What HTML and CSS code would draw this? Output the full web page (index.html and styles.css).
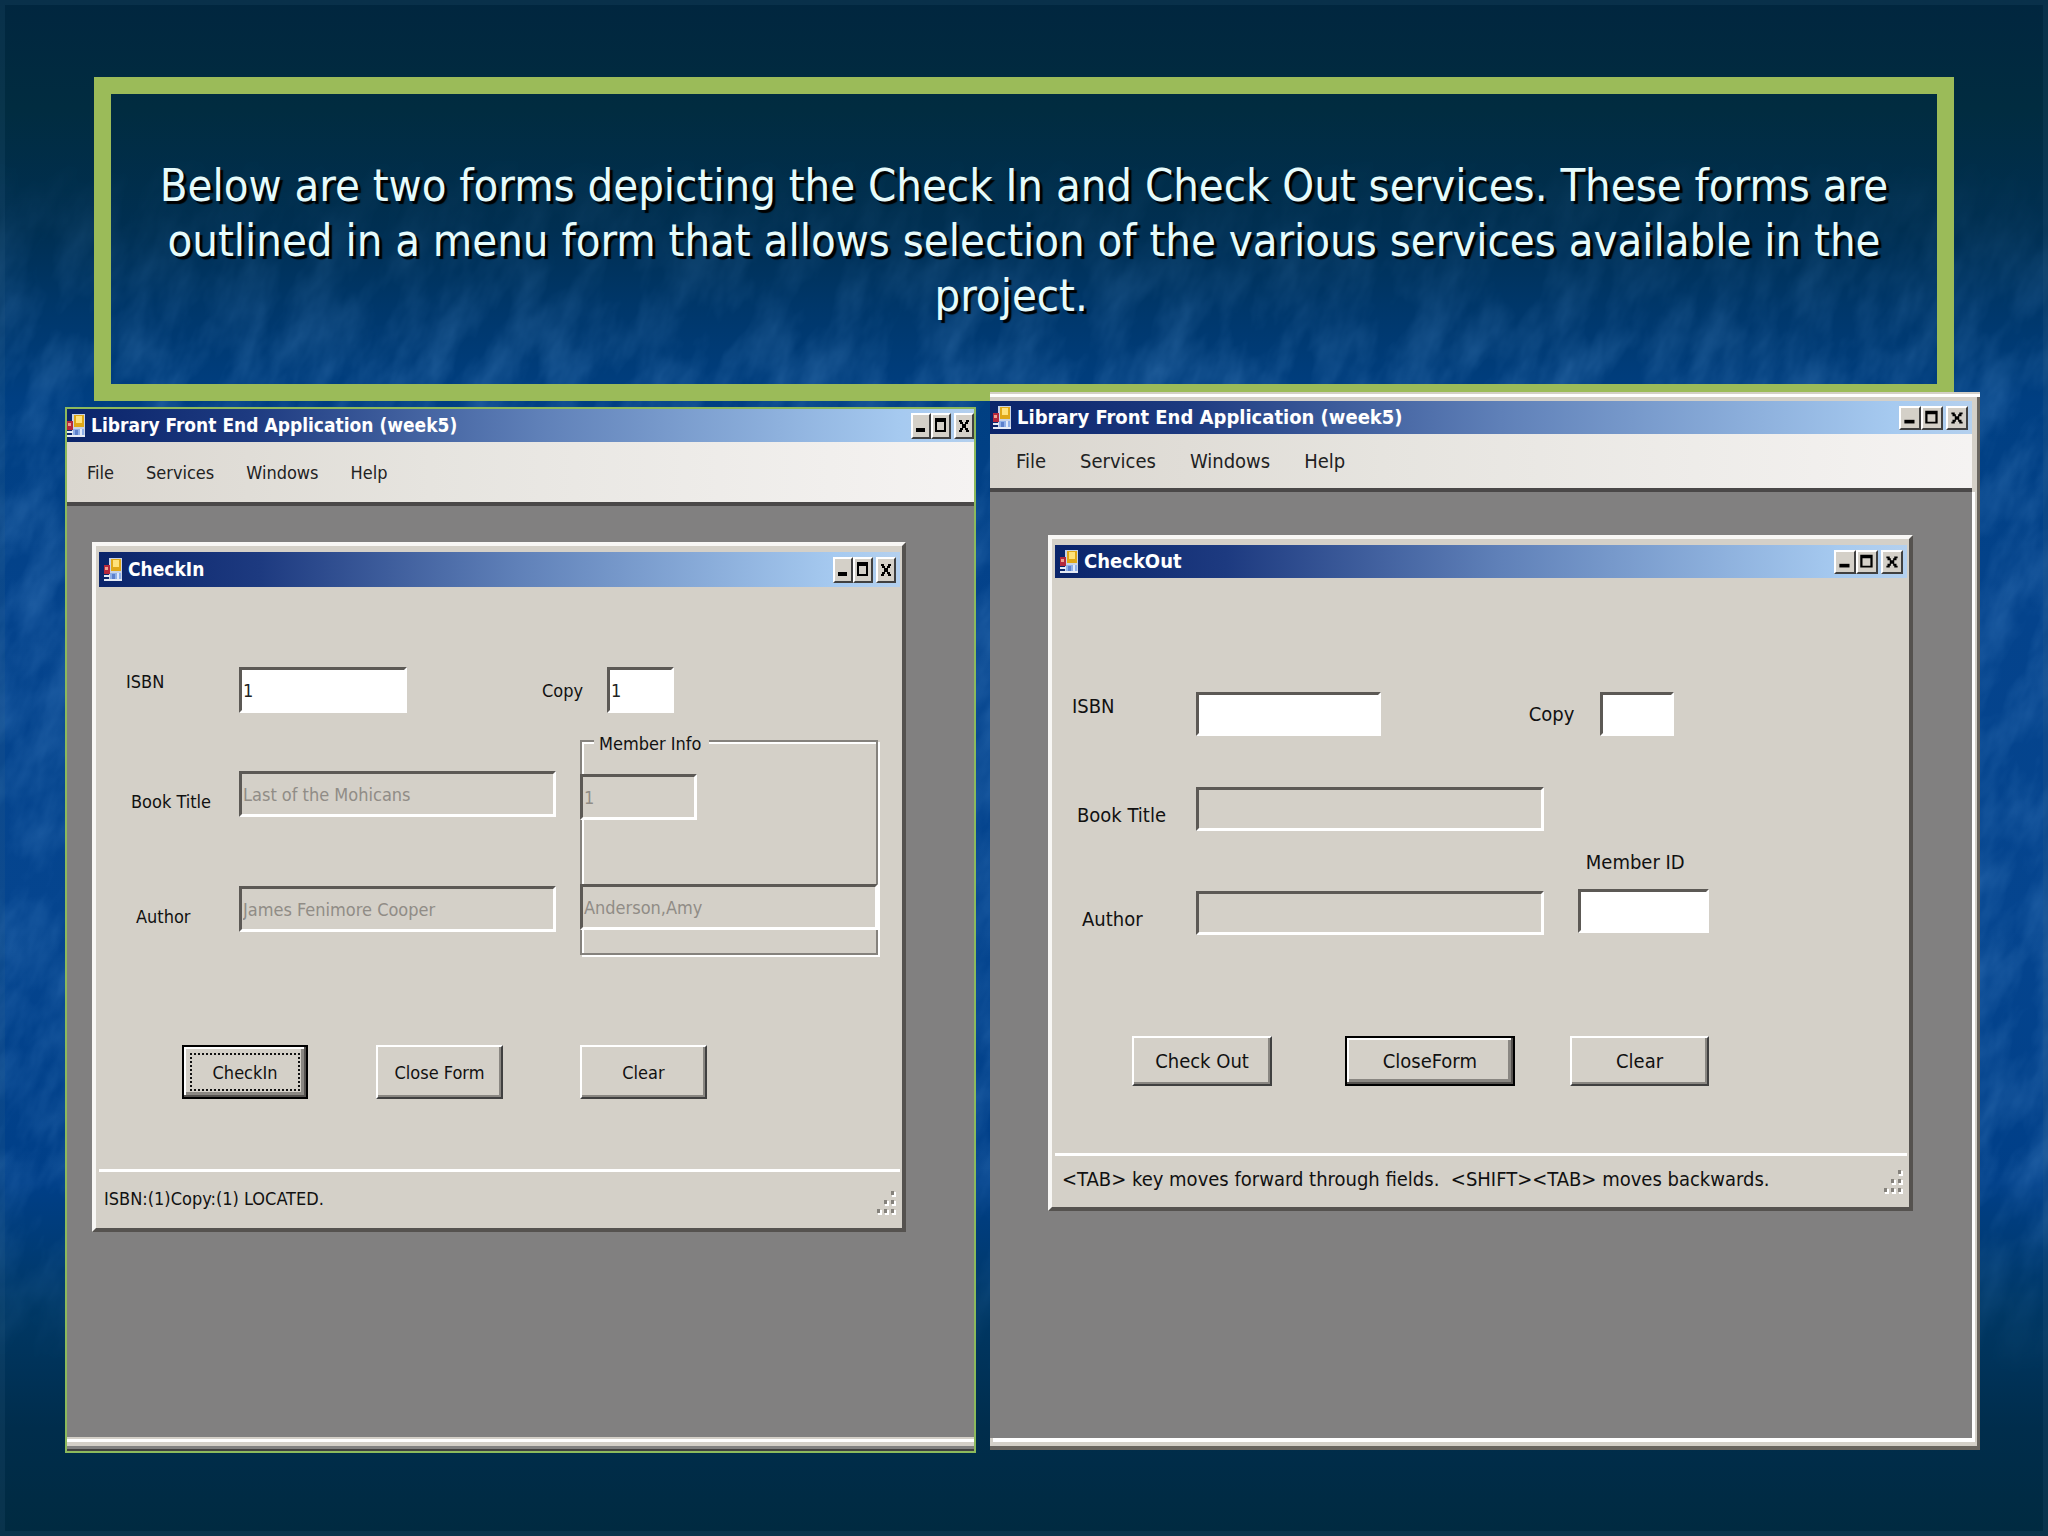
FILE: index.html
```
<!DOCTYPE html>
<html lang="en">
<head>
    <meta charset="UTF-8">
    <meta name="viewport" content="width=device-width, initial-scale=1.0">
    <title>Check In and Check Out</title>
    <link rel="stylesheet" href="styles.css">
</head>
<body>
    <!-- water texture behind the slide -->
    <svg class="texture" aria-hidden="true">
        <filter id="water" x="0" y="0" width="100%" height="100%">
            <feTurbulence type="fractalNoise" baseFrequency="0.03 0.013" numOctaves="4" seed="7"/>
            <feColorMatrix values="0 0 0 0 0.15  0 0 0 0 0.4  0 0 0 0 0.78  1.6 0 0 0 -0.55"/>
        </filter>
        <rect x="-30%" y="-60%" width="160%" height="220%" filter="url(#water)" transform="rotate(24 1024 768)"/>
    </svg>

    <!-- shared window icons -->
    <svg class="defs" aria-hidden="true">
        <symbol id="app-icon" viewBox="0 0 18 23" preserveAspectRatio="none">
            <rect x="5" y="0" width="13" height="23" fill="#c9d3e6"/>
            <rect x="0" y="7" width="6" height="9" fill="#b5283c"/>
            <rect x="1" y="9" width="3" height="3" fill="#f0a090"/>
            <rect x="0" y="17" width="6" height="2" fill="#e6ebf5"/>
            <rect x="0" y="21" width="18" height="2" fill="#e6ebf5"/>
            <rect x="7" y="1" width="10" height="12" fill="#e0a818"/>
            <rect x="9" y="2" width="6" height="7" fill="#ffe27a"/>
            <rect x="6" y="15" width="11" height="6" fill="#8fb0e8"/>
            <rect x="8" y="16" width="3" height="5" fill="#5c80cc"/>
            <rect x="13" y="15" width="2" height="6" fill="#dfe8fa"/>
        </symbol>
        <symbol id="ico-min" viewBox="0 0 16 22" preserveAspectRatio="none">
            <rect x="3" y="13" width="9" height="4" fill="#000"/>
        </symbol>
        <symbol id="ico-max" viewBox="0 0 16 22" preserveAspectRatio="none">
            <path d="M2 3h11v14H2zM4 7v8h7V7z" fill="#000" fill-rule="evenodd"/>
        </symbol>
        <symbol id="ico-close" viewBox="0 0 16 22" preserveAspectRatio="none">
            <path d="M3 5h3v2h1v2h2V7h1V5h3v2h-1v2h-2v4h2v2h1v2h-3v-2H9v-2H7v2H6v2H3v-2h1v-2h2V9H4V7H3z" fill="#000"/>
        </symbol>
        <symbol id="grip" viewBox="0 0 21 26" preserveAspectRatio="none">
            <path d="M16 2h4v5h-4zM9 11h4v5H9zM16 11h4v5h-4zM2 20h4v5H2zM9 20h4v5H9zM16 20h4v5h-4z" fill="#fff"/>
            <path d="M15 1h3v4h-3zM8 10h3v4H8zM15 10h3v4h-3zM1 19h3v4H1zM8 19h3v4H8zM15 19h3v4h-3z" fill="#85827c"/>
        </symbol>
    </svg>

    <div class="slide">
        <h1>Below are two forms depicting the Check In and Check Out services. These forms are outlined in a menu form that allows selection of the various services available in the project.&nbsp;&nbsp;</h1>

        <div class="desktop">
            <section class="app app-in">
                <div class="titlebar">
                    <svg class="app-icon"><use href="#app-icon"/></svg>
                    <span class="caption">Library Front End Application (week5)</span>
                    <button type="button" aria-label="Minimize"><svg><use href="#ico-min"/></svg></button>
                    <button type="button" aria-label="Maximize"><svg><use href="#ico-max"/></svg></button>
                    <button type="button" class="close" aria-label="Close"><svg><use href="#ico-close"/></svg></button>
                </div>
                <nav class="menu">
                    <button type="button">File</button>
                    <button type="button">Services</button>
                    <button type="button">Windows</button>
                    <button type="button">Help</button>
                </nav>
                <div class="mdi">
                    <form class="child">
                        <div class="titlebar">
                            <svg class="app-icon"><use href="#app-icon"/></svg>
                            <span class="caption">CheckIn</span>
                            <button type="button" aria-label="Minimize"><svg><use href="#ico-min"/></svg></button>
                            <button type="button" aria-label="Maximize"><svg><use href="#ico-max"/></svg></button>
                            <button type="button" class="close" aria-label="Close"><svg><use href="#ico-close"/></svg></button>
                        </div>
                        <div class="row row-isbn">
                            <label for="in-isbn">ISBN</label>
                            <input type="text" id="in-isbn" value="1">
                            <label class="copy" for="in-copy">Copy</label>
                            <input type="text" id="in-copy" value="1">
                        </div>
                        <div class="row row-book">
                            <div class="fields">
                                <label class="title" for="in-title">Book Title</label>
                                <input type="text" id="in-title" value="Last of the Mohicans" disabled>
                                <label class="author" for="in-author">Author</label>
                                <input type="text" id="in-author" value="James Fenimore Cooper" disabled>
                            </div>
                            <fieldset class="member">
                                <legend>Member Info</legend>
                                <input type="text" class="member-no" aria-label="Member number" value="1" disabled>
                                <input type="text" class="member-name" aria-label="Member name" value="Anderson,Amy" disabled>
                            </fieldset>
                        </div>
                        <div class="row row-buttons">
                            <button type="button" class="btn default focused">CheckIn</button>
                            <button type="button" class="btn">Close Form</button>
                            <button type="button" class="btn">Clear</button>
                        </div>
                        <div class="status">
                            <span>ISBN:(1)Copy:(1) LOCATED.</span>
                            <svg class="grip"><use href="#grip"/></svg>
                        </div>
                    </form>
                </div>
            </section>

            <section class="app app-out">
                <div class="titlebar">
                    <svg class="app-icon"><use href="#app-icon"/></svg>
                    <span class="caption">Library Front End Application (week5)</span>
                    <button type="button" aria-label="Minimize"><svg><use href="#ico-min"/></svg></button>
                    <button type="button" aria-label="Maximize"><svg><use href="#ico-max"/></svg></button>
                    <button type="button" class="close" aria-label="Close"><svg><use href="#ico-close"/></svg></button>
                </div>
                <nav class="menu">
                    <button type="button">File</button>
                    <button type="button">Services</button>
                    <button type="button">Windows</button>
                    <button type="button">Help</button>
                </nav>
                <div class="mdi">
                    <form class="child">
                        <div class="titlebar">
                            <svg class="app-icon"><use href="#app-icon"/></svg>
                            <span class="caption">CheckOut</span>
                            <button type="button" aria-label="Minimize"><svg><use href="#ico-min"/></svg></button>
                            <button type="button" aria-label="Maximize"><svg><use href="#ico-max"/></svg></button>
                            <button type="button" class="close" aria-label="Close"><svg><use href="#ico-close"/></svg></button>
                        </div>
                        <div class="row row-isbn">
                            <label for="out-isbn">ISBN</label>
                            <input type="text" id="out-isbn">
                            <label class="copy" for="out-copy">Copy</label>
                            <input type="text" id="out-copy">
                        </div>
                        <div class="row row-book">
                            <div class="fields">
                                <label class="title" for="out-title">Book Title</label>
                                <input type="text" id="out-title" disabled>
                                <label class="author" for="out-author">Author</label>
                                <input type="text" id="out-author" disabled>
                            </div>
                            <div class="member-id">
                                <label for="out-member">Member ID</label>
                                <input type="text" id="out-member">
                            </div>
                        </div>
                        <div class="row row-buttons">
                            <button type="button" class="btn">Check Out</button>
                            <button type="button" class="btn default">CloseForm</button>
                            <button type="button" class="btn">Clear</button>
                        </div>
                        <div class="status">
                            <span>&lt;TAB&gt; key moves forward through fields.&nbsp; &lt;SHIFT&gt;&lt;TAB&gt; moves backwards.</span>
                            <svg class="grip"><use href="#grip"/></svg>
                        </div>
                    </form>
                </div>
            </section>
        </div>
    </div>
</body>
</html>
```
FILE: styles.css
```
* {
    box-sizing: border-box;
}
body {
    margin: 0;
    font-family: "DejaVu Sans Condensed", "Liberation Sans", sans-serif;
    background: linear-gradient(#01263f 0%, #012c40 7%, #002f52 15%, #00376a 20%, #003f82 26%, #04438c 40%, #05458f 60%, #003f88 77%, #003866 85%, #002d4c 93%, #002a40 100%);
}
.texture {
    position: absolute;
    inset: 0;
    width: 100%;
    height: 100%;
    opacity: 0.3;
    -webkit-mask-image: linear-gradient(transparent 10%, #000 24%, #000 76%, transparent 90%);
    mask-image: linear-gradient(transparent 10%, #000 24%, #000 76%, transparent 90%);
}
.defs {
    position: absolute;
    width: 0;
    height: 0;
}
.slide {
    position: relative;
    display: flex;
    flex-direction: column;
    min-height: 100vh;
    padding: 77px 68px 83px 65px;
    box-shadow: inset 0 0 0 5px rgba(60, 110, 140, 0.15);
}
h1 {
    display: flex;
    align-items: center;
    justify-content: center;
    height: 324px;
    margin: 0 26px 0 29px;
    padding: 2px 40px 0;
    border: 17px solid #9bbb59;
    color: #e6fbfb;
    font-size: 45px;
    font-weight: 400;
    line-height: 55px;
    text-align: center;
    text-shadow: 3px 3px 1px #000;
}
.desktop {
    display: grid;
    grid-template-columns: 911fr 990fr;
    gap: 14px;
    flex: 1;
}

/* application windows */
.app {
    display: flex;
    flex-direction: column;
    background: #d4d0c8;
    line-height: 25px;
}
.app-in {
    margin-top: 6px;
    border: 2px solid #8cb95c;
    font-size: 18px;
}
.app-out {
    margin-top: -9px;
    margin-bottom: 3px;
    padding: 4px 5px 0 0;
    border: solid #d4d0c8;
    border-width: 2px 0 0;
    box-shadow: inset 0 3px #fff, inset -3px -4px #69655f;
    font-size: 20px;
}
.titlebar {
    display: flex;
    align-items: center;
    color: #fff;
    background: linear-gradient(90deg, #0a246a, #1d3a80 20%, #5f80b8 52%, #a6caf0 92%, #b4d0ee);
}
.titlebar .caption {
    flex: 1;
    margin-left: 6px;
    font-weight: 700;
    white-space: nowrap;
}
.app-in .caption {
    font-size: 19px;
}
.titlebar button {
    width: 20px;
    height: 26px;
    padding: 0;
    border: solid;
    border-width: 2px;
    border-color: #fff #404040 #404040 #fff;
    background: #d4d0c8;
}
.titlebar button svg {
    display: block;
    width: 100%;
    height: 100%;
}
.titlebar .close {
    margin-left: 3px;
}
.app-icon {
    width: 18px;
    height: 23px;
}
.app-in > .titlebar {
    height: 33px;
}
.app-out > .titlebar {
    height: 33px;
    margin-top: 3px;
    margin-right: 3px;
    padding: 0 4px 0 3px;
}
.app-out .titlebar button {
    width: 22px;
    height: 24px;
}
.menu {
    display: flex;
    align-items: center;
    background: linear-gradient(90deg, #dad6cf, #e6e4df 40%, #f5f3f2);
}
.menu button {
    padding: 0;
    border: 0;
    background: none;
    color: #222;
    font: inherit;
}
.app-in .menu {
    gap: 32px;
    height: 60px;
    padding-left: 20px;
}
.app-out .menu {
    gap: 34px;
    height: 54px;
    margin-right: 3px;
    padding-left: 26px;
}
.mdi {
    flex: 1;
    background: #818080;
    border-top: 4px solid #4a4848;
}
.app-in .mdi {
    padding: 36px 68px 0 25px;
    margin-bottom: 14px;
    box-shadow: 0 2px #d4d0c8, 0 5px #fff, 0 9px #d4d0c8, 0 12px #808080, 0 14px #404040;
}
.app-out .mdi {
    padding: 43px 59px 0 58px;
    margin-right: 3px;
    margin-bottom: 12px;
    box-shadow: 3px 4px #fff;
    clip-path: inset(0 -3px -4px 0);
}

/* child forms */
.child {
    display: flex;
    flex-direction: column;
    padding: 6px 2px 4px 3px;
    border: solid;
    border-width: 4px;
    border-color: #f8f7f5 #55524f #55524f #f8f7f5;
    background: #d4d0c8;
    color: #111;
}
.child .titlebar {
    height: 35px;
    padding: 0 4px 0 5px;
}
.app-out .child .titlebar {
    height: 33px;
}
.row {
    display: grid;
}
input {
    width: 100%;
    min-width: 0;
    height: 46px;
    padding: 0 1px;
    border: solid;
    border-width: 3px;
    border-color: #5c5955 #fff #fff #5c5955;
    background: #fff;
    color: #222;
    font: inherit;
}
input:disabled {
    background: #d4d0c8;
    color: #908c86;
}
.app-out input {
    height: 44px;
}
.row-isbn label:first-child {
    padding-top: 2px;
}
.row-isbn .copy {
    grid-column: 4;
    align-self: center;
}
.title {
    padding: 18px 0 0 5px;
}
.author {
    padding: 18px 0 0 10px;
}
.app-out .title,
.app-out .author {
    padding-top: 16px;
}
.btn {
    height: 54px;
    padding: 0;
    border: 2px solid;
    border-color: #fff #404040 #404040 #fff;
    background: #d4d0c8;
    box-shadow: inset -2px -2px #8a8782;
    color: #111;
    font: inherit;
}
.default {
    border-color: #000;
    box-shadow: inset -2px -2px #55524f, inset 2px 2px #fff, inset -5px -5px #8a8782;
}
.focused {
    outline: 2px dotted #111;
    outline-offset: -10px;
}
.row-buttons .btn:nth-child(1) {
    grid-column: 2;
}
.row-buttons .btn:nth-child(2) {
    grid-column: 4;
}
.row-buttons .btn:nth-child(3) {
    grid-column: 6;
}
.status {
    display: flex;
    align-items: center;
    justify-content: space-between;
    border-top: 3px solid #fff;
    white-space: nowrap;
}
.grip {
    align-self: flex-end;
    width: 21px;
    height: 26px;
    margin: 0 3px 8px 0;
}

/* check in form */
.app-in .row-isbn {
    grid-template-columns: 113fr 168fr 135fr 65fr 67fr 226fr;
    padding: 80px 0 0 27px;
}
.app-in .row-book {
    grid-template-columns: 430fr 24fr 298fr 22fr;
    height: 215px;
    margin: 27px 0 0 27px;
}
.app-in .fields {
    display: grid;
    grid-template-columns: 113fr 317fr;
    align-content: start;
    row-gap: 69px;
    padding-top: 31px;
}
.member {
    grid-column: 3;
    min-width: 0;
    margin: -15px 0 0;
    padding: 0;
    border: 2px solid #85827d;
    box-shadow: inset 2px 2px #fff, 2px 2px #fff;
}
.member legend {
    margin-left: 12px;
    padding: 6px 8px 0 5px;
    background: #d4d0c8;
}
.member input {
    display: block;
}
.member-no {
    max-width: 117px;
    margin: 18px 0 0 -2px;
}
.member .member-name {
    width: calc(100% + 4px);
    margin: 64px 0 0 -2px;
}
.app-in .row-buttons {
    grid-template-columns: 83fr 126fr 68fr 127fr 77fr 127fr 193fr;
    margin-top: 90px;
}
.app-in .status {
    height: 55px;
    margin-top: 70px;
    padding-left: 5px;
}

/* check out form */
.app-out .row-isbn {
    grid-template-columns: 124fr 184fr 147fr 71fr 74fr 232fr;
    padding: 114px 0 0 17px;
}
.app-out .row-book {
    grid-template-columns: 470fr 34fr 131fr 197fr;
    margin: 51px 0 0 17px;
}
.app-out .fields {
    display: grid;
    grid-template-columns: 124fr 346fr;
    align-content: start;
    row-gap: 60px;
}
.member-id {
    display: flex;
    flex-direction: column;
    justify-content: flex-end;
    gap: 14px;
    grid-column: 3;
    padding-bottom: 2px;
}
.member-id label {
    padding-left: 8px;
}
.app-out .row-buttons {
    grid-template-columns: 77fr 139fr 73fr 169fr 55fr 139fr 197fr;
    margin-top: 101px;
}
.app-out .btn {
    height: 50px;
}
.app-out .status {
    height: 50px;
    margin-top: 67px;
    padding-left: 7px;
}
```
